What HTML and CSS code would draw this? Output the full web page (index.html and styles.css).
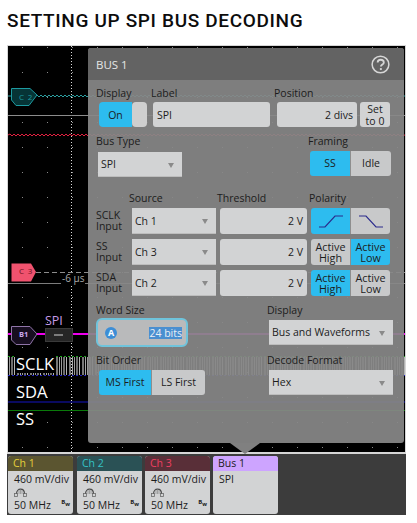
FILE: index.html
```html
<!DOCTYPE html>
<html lang="en">
<head>
<meta charset="utf-8">
<title>Setting up SPI bus decoding</title>
<link rel="stylesheet" href="styles.css">
</head>
<body>
<h1 class="title">SETTING UP SPI BUS DECODING</h1>
<div class="scope">
  <div class="screen">
    <svg class="traces" viewBox="8 46 397 406" width="397" height="406" aria-hidden="true">
      <defs>
        <pattern id="dots" x="22" y="47" width="25" height="25" patternUnits="userSpaceOnUse">
          <rect x="0" y="0" width="1" height="1" fill="#8a8a8a"/>
        </pattern>
        <pattern id="clock" x="9" y="357" width="13" height="18" patternUnits="userSpaceOnUse">
          <rect x="0" y="0" width="1" height="18" fill="#9a9a9a"/>
          <rect x="2" y="0" width="2" height="18" fill="#6e6e6e"/>
          <rect x="5" y="0" width="1" height="18" fill="#b4b4b4"/>
          <rect x="8" y="0" width="2" height="18" fill="#777"/>
          <rect x="11" y="0" width="1" height="18" fill="#a6a6a6"/>
        </pattern>
      </defs>
      <rect x="8" y="46" width="397" height="406" fill="url(#dots)"/>
      <line x1="71.500" y1="46" x2="71.500" y2="452" stroke="#d8d8d8" stroke-dasharray="1 2"/>
      <line x1="8" y1="115.500" x2="405" y2="115.500" stroke="#8c8c8c"/>
      <line x1="8" y1="283.500" x2="405" y2="283.500" stroke="#7c7c7c"/>
      <line x1="36" y1="272.500" x2="405" y2="272.500" stroke="#8c8c8c" stroke-dasharray="5 3"/>
      <polyline class="teal" points="8,96 11,96 13,95 15,97 17,95 19,97 21,95 23,97 25,95 27,97 29,95 31,97 33,95 35,97 37,95 39,97 41,95 43,97 45,95 47,97 49,95 51,97 53,95 55,97 57,95 59,97 61,95 63,97 65,95 67,97 69,95 71,97 73,95 75,97 77,95 79,97 81,95 83,97 85,95 87,97 89,95 91,97 93,95 95,97 97,95 99,97 101,95 103,97 105,95 107,97 109,95 111,97 113,95 115,97 117,95 119,97 121,95 123,97 125,95 127,97 129,95 131,97 133,95 135,97 137,95 139,97 141,95 143,97 145,95 147,97 149,95 151,97 153,95 155,97 157,95 159,97 161,95 163,97 165,95 167,97 169,95 171,97 173,95 175,97 177,95 179,97 181,95 183,97 185,95 187,97 189,95 191,97 193,95 195,97 197,95 199,97 201,95 203,97 205,95 207,97 209,95 211,97 213,95 215,97 217,95 219,97 221,95 223,97 225,95 227,97 229,95 231,97 233,95 235,97 237,95 239,97 241,95 243,97 245,95 247,97 249,95 251,97 253,95 255,97 257,95 259,97 261,95 263,97 265,95 267,97 269,95 271,97 273,95 275,97 277,95 279,97 281,95 283,97 285,95 287,97 289,95 291,97 293,95 295,97 297,95 299,97 301,95 303,97 305,95 307,97 309,95 311,97 313,95 315,97 317,95 319,97 321,95 323,97 325,95 327,97 329,95 331,97 333,95 335,97 337,95 339,97 341,95 343,97 345,95 347,97 349,95 351,97 353,95 355,97 357,95 359,97 361,95 363,97 365,95 367,97 369,95 371,97 373,95 375,97 377,95 379,97 381,95 383,97 385,95 387,97 389,95 391,97 393,95 395,97 397,95 399,97 401,96 405,96"/>
      <polyline class="red" points="8,135 10,134 12,136 14,134 16,136 18,134 20,136 22,134 24,136 26,134 28,136 30,134 32,136 34,134 36,136 38,134 40,136 42,134 44,136 46,134 48,136 50,134 52,136 54,134 56,136 58,134 60,136 62,134 64,136 66,134 68,136 70,134 72,136 74,134 76,136 78,134 80,136 82,134 84,136 86,134 88,136 90,134 92,136 94,134 96,136 98,134 100,136 102,134 104,136 106,134 108,136 110,134 112,136 114,134 116,136 118,134 120,136 122,134 124,136 126,134 128,136 130,134 132,136 134,134 136,136 138,134 140,136 142,134 144,136 146,134 148,136 150,134 152,136 154,134 156,136 158,134 160,136 162,134 164,136 166,134 168,136 170,134 172,136 174,134 176,136 178,134 180,136 182,134 184,136 186,134 188,136 190,134 192,136 194,134 196,136 198,134 200,136 202,134 204,136 206,134 208,136 210,134 212,136 214,134 216,136 218,134 220,136 222,134 224,136 226,134 228,136 230,134 232,136 234,134 236,136 238,134 240,136 242,134 244,136 246,134 248,136 250,134 252,136 254,134 256,136 258,134 260,136 262,134 264,136 266,134 268,136 270,134 272,136 274,134 276,136 278,134 280,136 282,134 284,136 286,134 288,136 290,134 292,136 294,134 296,136 298,134 300,136 302,134 304,136 306,134 308,136 310,134 312,136 314,134 316,136 318,134 320,136 322,134 324,136 326,134 328,136 330,134 332,136 334,134 336,136 338,134 340,136 342,134 344,136 346,134 348,136 350,134 352,136 354,134 356,136 358,134 360,136 362,134 364,136 366,134 368,136 370,134 372,136 374,134 376,136 378,134 380,136 382,134 384,136 386,134 388,136 390,134 392,136 394,134 396,136 398,134 400,136 405,135"/>
      <line x1="8" y1="334" x2="405" y2="334" stroke="#ee00ee" stroke-width="2"/>
      <rect x="45.500" y="328.500" width="27" height="13" fill="#262626" stroke="#3a3a3a"/>
      <line x1="54" y1="335" x2="63" y2="335" stroke="#7d7d7d" stroke-width="2"/>
      <rect x="8" y="357" width="397" height="18" fill="url(#clock)"/>
      <line x1="8" y1="356.500" x2="405" y2="356.500" stroke="#1aa01a" stroke-dasharray="2 2"/>
      <line x1="8" y1="375.500" x2="405" y2="375.500" stroke="#2222bb" stroke-dasharray="2 2"/>
      <line x1="8" y1="402" x2="405" y2="402" stroke="#1414c0"/>
      <line x1="8" y1="410.500" x2="405" y2="410.500" stroke="#0a7a0a"/>
      <path d="M11.500 88.500 H30 L37 95 L29 105.500 H16 L11.500 100 Z" fill="#063436" stroke="#1d9aa0"/>
      <path d="M11.500 263.500 H31 L36 272 L31 281.500 H11.500 Z" fill="#f0526e"/>
      <path d="M11.500 326.500 H30 L37 334 L30 344.500 H16 L11.500 340 Z" fill="#170e20" stroke="#8f74a8"/>
    </svg>
    <span class="tag tag-c2">C 2</span>
    <span class="tag tag-c3">C 3</span>
    <span class="tag tag-b1">B1</span>
    <span class="time">-6 µs</span>
    <span class="bus-name">SPI</span>
    <span class="sig sig-sclk">SCLK</span>
    <span class="sig sig-sda">SDA</span>
    <span class="sig sig-ss">SS</span>

    <section class="panel">
      <header class="panel-head">
        <span>BUS 1</span>
        <svg class="help" viewBox="0 0 20 20" width="19" height="19" aria-hidden="true">
          <circle cx="10" cy="10" r="8.800" fill="none" stroke="#d6d6d6" stroke-width="1.600"/>
          <path d="M7 8 C7 5.500 9 5 10.200 5 C12 5 13.500 6 13.500 7.800 C13.500 10 10.400 10 10.400 12.200" fill="none" stroke="#d6d6d6" stroke-width="1.900"/>
          <circle cx="10.400" cy="14.800" r="1.200" fill="#d6d6d6"/>
        </svg>
      </header>
      <div class="panel-body">
        <div class="row row-top">
          <div class="field f-display">
            <label>Display</label>
            <div class="toggle"><span class="on">On</span><span class="knob"></span></div>
          </div>
          <div class="field f-label">
            <label>Label</label>
            <div class="input w-label left">SPI</div>
          </div>
          <div class="field f-pos">
            <label>Position</label>
            <div class="input w-pos">2 divs</div>
          </div>
          <button class="set">Set<br>to 0</button>
        </div>

        <div class="row row-bus">
          <div class="field">
            <label>Bus Type</label>
            <div class="select w-type">SPI<i class="arrow"></i></div>
          </div>
          <div class="field f-framing">
            <label>Framing</label>
            <div class="seg"><span class="active">SS</span><span>Idle</span></div>
          </div>
        </div>

        <div class="inputs">
          <span></span><label class="col-source">Source</label><label class="col-th">Threshold</label><label>Polarity</label>

          <label class="two">SCLK<br>Input</label>
          <div class="select w-src">Ch 1<i class="arrow"></i></div>
          <div class="input w-th">2 V</div>
          <div class="seg seg-icons">
            <span class="active"><svg viewBox="0 0 26 14" width="26" height="14" aria-hidden="true"><path d="M1 13 H7 L17 2 H25" fill="none" stroke="#2a2a8c" stroke-width="1.200"/></svg></span>
            <span><svg viewBox="0 0 26 14" width="26" height="14" aria-hidden="true"><path d="M1 2 H8 L18 13 H25" fill="none" stroke="#2a2a8c" stroke-width="1.200"/></svg></span>
          </div>

          <label class="two">SS<br>Input</label>
          <div class="select w-src">Ch 3<i class="arrow"></i></div>
          <div class="input w-th">2 V</div>
          <div class="seg seg-two"><span>Active<br>High</span><span class="active">Active<br>Low</span></div>

          <label class="two">SDA<br>Input</label>
          <div class="select w-src">Ch 2<i class="arrow"></i></div>
          <div class="input w-th">2 V</div>
          <div class="seg seg-two"><span class="active">Active<br>High</span><span>Active<br>Low</span></div>
        </div>

        <div class="row row-word">
          <div class="field f-word">
            <label>Word Size</label>
            <div class="focus"><b class="badge">A</b><span class="sel">24 bits</span></div>
          </div>
          <div class="field">
            <label>Display</label>
            <div class="select w-wide">Bus and Waveforms<i class="arrow"></i></div>
          </div>
        </div>

        <div class="row row-order">
          <div class="field f-word">
            <label>Bit Order</label>
            <div class="seg seg-order"><span class="active">MS First</span><span>LS First</span></div>
          </div>
          <div class="field">
            <label>Decode Format</label>
            <div class="select w-wide">Hex<i class="arrow"></i></div>
          </div>
        </div>
      </div>
      <i class="pointer"></i>
    </section>
  </div>

  <div class="tabs">
    <article class="tab ch1"><h2>Ch 1</h2><p>460 mV/div</p>
      <svg class="probe" viewBox="0 0 14 10" width="14" height="10" aria-hidden="true"><path d="M2.500 7 C2.500 .500 10.500 .500 10.500 7" fill="none" stroke="#4a4a4a" stroke-width="1.200"/><path d="M5 3 V7 M6.500 2.500 V7 M8 3 V7" stroke="#8a8a8a" stroke-width=".7"/><rect x=".5" y="6.500" width="3" height="3" fill="none" stroke="#6a6a6a" stroke-width=".8"/><rect x="9.500" y="6.500" width="3" height="3" fill="none" stroke="#6a6a6a" stroke-width=".8"/></svg>
      <div class="bw"><span>50 MHz</span><small>B<sub>w</sub></small></div></article>
    <article class="tab ch2"><h2>Ch 2</h2><p>460 mV/div</p>
      <svg class="probe" viewBox="0 0 14 10" width="14" height="10" aria-hidden="true"><path d="M2.500 7 C2.500 .500 10.500 .500 10.500 7" fill="none" stroke="#4a4a4a" stroke-width="1.200"/><path d="M5 3 V7 M6.500 2.500 V7 M8 3 V7" stroke="#8a8a8a" stroke-width=".7"/><rect x=".5" y="6.500" width="3" height="3" fill="none" stroke="#6a6a6a" stroke-width=".8"/><rect x="9.500" y="6.500" width="3" height="3" fill="none" stroke="#6a6a6a" stroke-width=".8"/></svg>
      <div class="bw"><span>50 MHz</span><small>B<sub>w</sub></small></div></article>
    <article class="tab ch3"><h2>Ch 3</h2><p>460 mV/div</p>
      <svg class="probe" viewBox="0 0 14 10" width="14" height="10" aria-hidden="true"><path d="M2.500 7 C2.500 .500 10.500 .500 10.500 7" fill="none" stroke="#4a4a4a" stroke-width="1.200"/><path d="M5 3 V7 M6.500 2.500 V7 M8 3 V7" stroke="#8a8a8a" stroke-width=".7"/><rect x=".5" y="6.500" width="3" height="3" fill="none" stroke="#6a6a6a" stroke-width=".8"/><rect x="9.500" y="6.500" width="3" height="3" fill="none" stroke="#6a6a6a" stroke-width=".8"/></svg>
      <div class="bw"><span>50 MHz</span><small>B<sub>w</sub></small></div></article>
    <article class="tab bus"><h2>Bus 1</h2><p>SPI</p></article>
  </div>
</div>
</body>
</html>
```

FILE: styles.css
```css
* { box-sizing: border-box; }
html, body { margin: 0; padding: 0; background: #fff; }
body { width: 417px; height: 523px; overflow: hidden; font-family: "Open Sans", "Noto Sans", sans-serif; color: #1c1c1c; }

.title {
  margin: 0;
  height: 45px;
  padding: 10px 0 0 7px;
  font: 500 19px/22px Roboto, sans-serif;
  letter-spacing: .65px;
  white-space: nowrap;
  color: #0c0c0c;
}

.scope { margin-left: 7px; width: 399px; height: 470px; background: #d6d6d6; padding: 1px 1px 0 1px; }
.screen { position: relative; width: 397px; height: 406px; background: #000; }
.traces { display: block; }
.teal { fill: none; stroke: #2a9fa0; stroke-width: 1; }
.red { fill: none; stroke: #e0203f; stroke-width: 1; }

.tag { position: absolute; font-size: 8px; line-height: 10px; letter-spacing: .8px; }
.tag-c2 { left: 11px; top: 46px; color: #1d9aa0; }
.tag-c3 { left: 11px; top: 220px; color: #6a1020; }
.tag-b1 { left: 11px; top: 283px; color: #c9a6ee; font-size: 7.500px; font-weight: 700; letter-spacing: 0; }
.time { position: absolute; left: 53px; top: 227px; background: #000; padding: 0 1px; font-size: 10px; line-height: 11px; color: #a8a8a8; }
.bus-name { position: absolute; left: 37px; top: 267px; font-size: 12.500px; line-height: 15px; color: #c49be8; }
.sig { position: absolute; left: 8px; color: #fff; font-size: 16.500px; line-height: 18px; }
.sig-sclk { top: 309px; background: #000; }
.sig-sda { top: 337px; }
.sig-ss { top: 364px; }

.panel {
  position: absolute;
  left: 80px; top: 2px;
  width: 316px; height: 395px;
  background: rgba(136, 136, 136, .93);
  border-radius: 3px;
}
.panel-head {
  height: 32px;
  padding: 0 8px;
  display: flex;
  align-items: center;
  justify-content: space-between;
  background: #636363;
  color: #e6e6e6;
  font-size: 11.500px;
  border-radius: 3px 3px 0 0;
}
.help { margin-right: 6px; }
.panel-body { padding: 0 11px 0 8px; }
.row { display: flex; }
label { display: block; font-size: 10.500px; line-height: 13px; color: #1c1c1c; white-space: nowrap; }
.field { display: flex; flex-direction: column; }
.row-top { height: 47px; padding-top: 7px; align-items: flex-end; }
.f-display { width: 55px; }
.f-label { width: 123px; }
.f-pos { width: 89px; }
.field > label { margin-bottom: 2px; }
.toggle { display: flex; margin-left: 3px; height: 25px; width: 48px; }
.toggle .on { flex: 0 0 33px; display: flex; align-items: center; justify-content: center; background: #2dbcef; border-radius: 4px 0 0 4px; font-size: 10.500px; }
.knob { flex: 1; background: #cfcfcf; border-radius: 4px; }
.input {
  height: 25px;
  display: flex; align-items: center; justify-content: flex-end;
  padding: 0 4px;
  background: #d2d3d4;
  border-radius: 3px;
  font-size: 10.500px;
}
.input.left { justify-content: flex-start; }
.w-label { width: 117px; margin-left: 2px; }
.w-pos { width: 80px; margin-left: 3px; }
.set {
  width: 30px; height: 25px; margin: 0 0 0 -3px; padding: 0;
  border: 0; border-radius: 3px;
  background: #d2d3d4;
  font: 10.500px/12px "Open Sans", sans-serif; color: #1c1c1c;
}
.select {
  position: relative;
  height: 25px;
  display: flex; align-items: center;
  padding-left: 3px;
  background: #d2d3d4;
  font-size: 10.500px;
  border-bottom: 1px solid #bdbdbd;
}
.arrow { position: absolute; right: 8px; top: 11px; width: 0; height: 0; border: 3.500px solid transparent; border-top: 5px solid #8a8a8a; border-bottom: 0; }
.w-type { width: 84px; margin-left: 2px; margin-top: 1px; }
.row-bus { justify-content: space-between; height: 50px; padding-top: 8px; }
.row-bus .field > label { margin-bottom: 3px; }
.row-bus .select { margin-top: 1px; }
.f-framing { margin-right: 2px; width: 83px; }
.f-framing .seg { margin-left: 2px; width: 81px; }
.seg { display: flex; height: 25px; }
.seg span {
  flex: 1; display: flex; align-items: center; justify-content: center;
  background: #c8c9ca;
  font-size: 10.500px; line-height: 11px; text-align: center;
}
.seg span:first-child { border-radius: 3px 0 0 3px; border-right: 1px solid #8e8e8e; }
.seg span:last-child { border-radius: 0 3px 3px 0; }
.seg .active { background: #2dbcef; }
.seg-two span { font-size: 10.800px; }

.inputs {
  display: grid;
  grid-template-columns: 36px 88px 89px 81px;
  grid-auto-rows: 26px;
  row-gap: 5px;
  align-items: center;
  height: 119px;
}
.inputs > label:nth-child(-n+4) { align-self: end; margin-bottom: -2px; }
.inputs > .seg { margin-left: 2px; height: 26px; }
.col-source { margin-left: -3px; }
.col-th { margin-left: -3px; }
.two { line-height: 11.500px; }
.w-src { width: 84px; height: 26px; }
.w-th { width: 87px; height: 26px; }

.row-word { height: 50px; margin-top: 8px; }
.row-order { height: 50px; }
.f-word { width: 171px; }
.row-word .field > label { margin-bottom: 3px; }
.row-order .field > label { margin-bottom: 3px; }
.focus {
  width: 92px; height: 29px;
  margin-top: -2px;
  display: flex; align-items: center; justify-content: space-between;
  padding: 0 4px 0 7px;
  background: #b9babb;
  border: 2px solid #6fc4dc;
  border-radius: 6px;
  font-size: 10.500px;
}
.badge { width: 12px; height: 12px; border-radius: 50%; background: #3d8ed6; color: #fff; font-size: 9px; line-height: 12px; text-align: center; }
.sel { background: #4a8fd0; color: #e9eef5; line-height: 12px; }
.w-wide { width: 124px; margin-left: 2px; }
.seg-order { width: 106px; margin-left: 3px; }
.seg-order span:first-child { flex: 0 0 53px; }

.pointer {
  position: absolute;
  left: 142px; top: 395px;
  width: 0; height: 0;
  border-left: 15px solid transparent;
  border-right: 15px solid transparent;
  border-top: 11px solid #808080;
}

.tabs {
  display: flex;
  gap: 3px;
  height: 61px;
  padding: 2px 0 1px 1px;
  margin: 2px -1px 0;
  background: #3c3c3c;
}
.tab {
  width: 65px;
  background: #d2d3d4;
  border-radius: 3px;
  overflow: hidden;
  font-size: 10.500px;
  line-height: 13px;
}
.ch1 { margin-right: 1px; }
.tab h2 { margin: 0; height: 15px; padding-left: 5px; font-size: 10.500px; font-weight: 400; line-height: 15px; }
.tab p { margin: 0; padding: 2px 0 0 6px; }
.ch1 h2 { background: #5b5530; color: #e5d13a; }
.ch2 h2 { background: #2a5155; color: #35c3c6; }
.ch3 h2 { background: #592f38; color: #ee3f62; }
.bus h2 { background: #cda4ff; color: #1c1c1c; }
.probe { display: block; margin: 1px 0 0 6px; }
.bw { display: flex; justify-content: space-between; align-items: flex-start; padding: 2px 3px 0 6px; }
.bw small { display: block; font-size: 6px; line-height: 7px; font-weight: 700; }
.bw sub { font-size: 5.500px; vertical-align: -2px; line-height: 0; }
```
